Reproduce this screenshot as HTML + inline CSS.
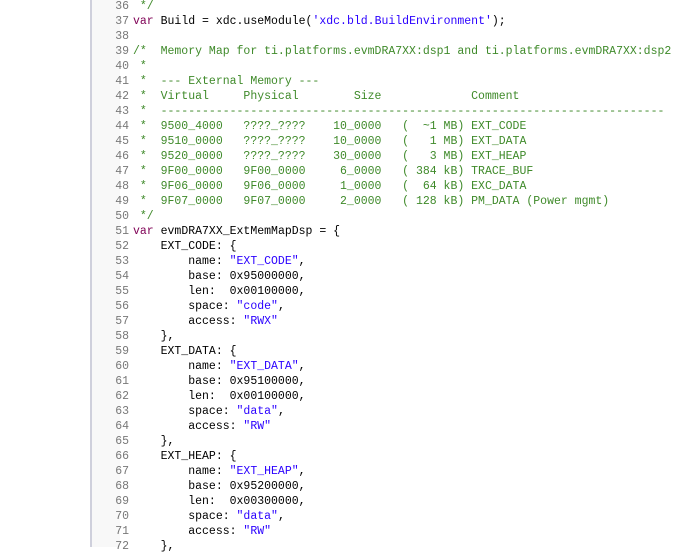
<!DOCTYPE html>
<html><head><meta charset="utf-8"><style>
html,body{margin:0;padding:0;width:694px;height:547px;overflow:hidden;background:#fff}
.vl{position:absolute;left:90px;top:0;width:2px;height:547px;background:#cfd0dc}
.gut{position:absolute;left:92px;top:0;width:28px;height:547px;background:#f8f8f8}
pre{position:absolute;margin:0;top:-1px;font-family:"Liberation Mono",monospace;font-size:11.5px;line-height:15px;}
.ln{left:92px;width:37px;text-align:right;color:#787878}
.code{left:133px;color:#000}
.c{color:#3f8a2a}.k{color:#7f0055}.s{color:#2a00ff}
</style></head><body>
<div class="vl"></div><div class="gut"></div>
<pre class="ln">36
37
38
39
40
41
42
43
44
45
46
47
48
49
50
51
52
53
54
55
56
57
58
59
60
61
62
63
64
65
66
67
68
69
70
71
72</pre>
<pre class="code"><span class="c"> */</span>
<span class="k">var</span> Build = xdc.useModule(<span class="s">'xdc.bld.BuildEnvironment'</span>);

<span class="c">/*  Memory Map for ti.platforms.evmDRA7XX:dsp1 and ti.platforms.evmDRA7XX:dsp2
 *
 *  --- External Memory ---
 *  Virtual     Physical        Size             Comment
 *  -------------------------------------------------------------------------
 *  9500_4000   ????_????    10_0000   (  ~1 MB) EXT_CODE
 *  9510_0000   ????_????    10_0000   (   1 MB) EXT_DATA
 *  9520_0000   ????_????    30_0000   (   3 MB) EXT_HEAP
 *  9F00_0000   9F00_0000     6_0000   ( 384 kB) TRACE_BUF
 *  9F06_0000   9F06_0000     1_0000   (  64 kB) EXC_DATA
 *  9F07_0000   9F07_0000     2_0000   ( 128 kB) PM_DATA (Power mgmt)
 */</span>
<span class="k">var</span> evmDRA7XX_ExtMemMapDsp = {
    EXT_CODE: {
        name: <span class="s">"EXT_CODE"</span>,
        base: 0x95000000,
        len:  0x00100000,
        space: <span class="s">"code"</span>,
        access: <span class="s">"RWX"</span>
    },
    EXT_DATA: {
        name: <span class="s">"EXT_DATA"</span>,
        base: 0x95100000,
        len:  0x00100000,
        space: <span class="s">"data"</span>,
        access: <span class="s">"RW"</span>
    },
    EXT_HEAP: {
        name: <span class="s">"EXT_HEAP"</span>,
        base: 0x95200000,
        len:  0x00300000,
        space: <span class="s">"data"</span>,
        access: <span class="s">"RW"</span>
    },</pre>
</body></html>
